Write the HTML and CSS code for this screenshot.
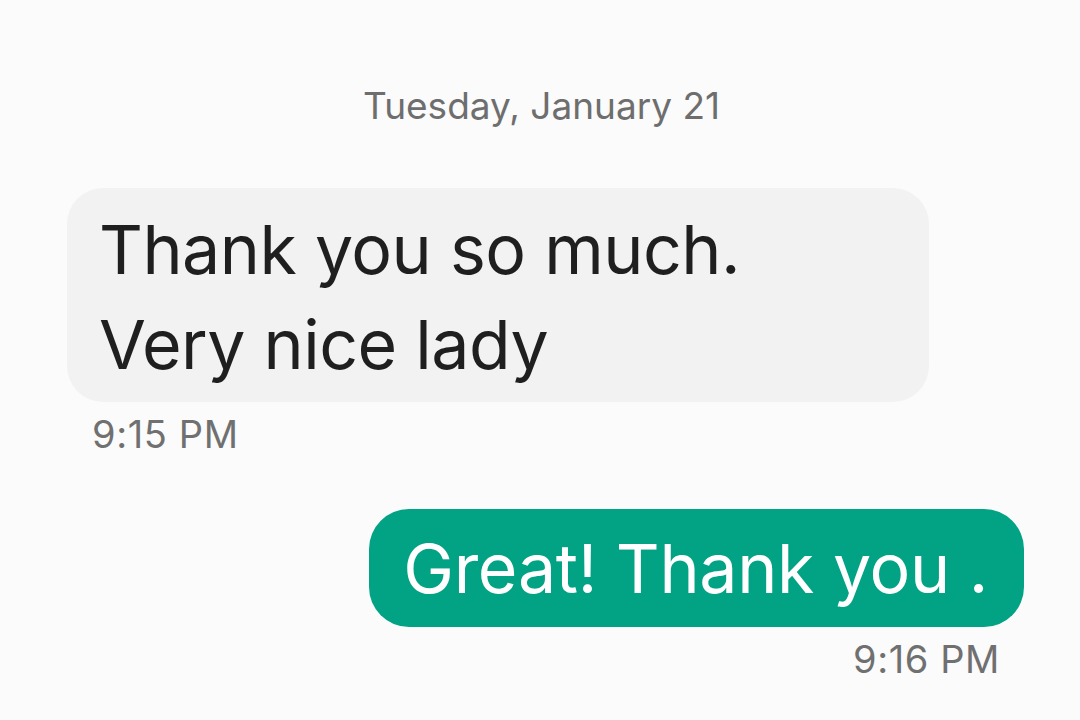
FILE: index.html
```html
<!DOCTYPE html>
<html>
<head>
<meta charset="utf-8">
<link rel="stylesheet" href="styles.css">
</head>
<body>
<main class="thread">
  <div class="date">Tuesday, January 21</div>
  <div class="msg msg-in">
    <div class="bubble bubble-in">Thank you so much.<br>Very nice lady</div>
    <div class="time">9:15 PM</div>
  </div>
  <div class="msg msg-out">
    <div class="bubble bubble-out">Great! Thank you .</div>
    <div class="time">9:16 PM</div>
  </div>
</main>
</body>
</html>
```
FILE: styles.css
```css
html, body {
  margin: 0;
  padding: 0;
  background: #fbfbfb;
  width: 1080px;
  height: 720px;
  overflow: hidden;
}
.thread {
  display: flex;
  flex-direction: column;
  padding: 84px 56px 0 67px;
  font-family: Inter, "Noto Sans", sans-serif;
}
.date {
  text-align: center;
  font-size: 37px;
  line-height: 44px;
  color: #6e6e6e;
  margin-left: -8px;
}
.msg {
  display: flex;
  flex-direction: column;
}
.msg-in {
  align-self: flex-start;
  margin-top: 60px;
}
.msg-out {
  align-self: flex-end;
  align-items: flex-end;
  margin-top: 53px;
}
.bubble {
  font-size: 68px;
  line-height: 95px;
  letter-spacing: -0.5px;
}
.bubble-in {
  background: #f2f2f2;
  color: #1f1f1f;
  width: 794px;
  padding: 14px 36px 10px 32px;
  border-radius: 36px;
}
.bubble-out {
  background: #01a384;
  color: #ffffff;
  letter-spacing: -0.3px;
  padding: 12px 36px 11px 34px;
  border-radius: 40px;
}
.time {
  font-size: 38px;
  line-height: 44px;
  letter-spacing: 0.6px;
  color: #707070;
  margin-top: 10px;
  padding: 0 24px 0 25px;
}
```
